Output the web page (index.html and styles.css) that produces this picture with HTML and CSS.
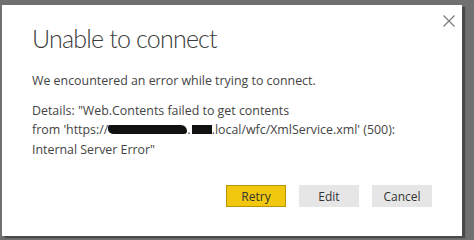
FILE: index.html
```html
<!DOCTYPE html>
<html lang="en">
<head>
    <meta charset="UTF-8">
    <title>Unable to connect</title>
    <link rel="stylesheet" href="styles.css">
</head>
<body>

    <div class="dialog">
        <button class="close" aria-label="Close">
            <svg width="12" height="12" viewBox="0 0 12 12">
                <path d="M0.5 0.5 L11.5 11.5 M11.5 0.5 L0.5 11.5" stroke="#7a7a7a" stroke-width="1.2" fill="none"/>
            </svg>
        </button>

        <h1>Unable to connect</h1>

        <p class="message">We encountered an error while trying to connect.</p>

        <p class="details">Details: "Web.Contents failed to get contents<br>from 'https://<span class="redact long"></span>.<span class="redact short"></span>.local/wfc/XmlService.xml' (500):<br>Internal Server Error"</p>

        <div class="actions">
            <button class="btn primary">Retry</button>
            <button class="btn">Edit</button>
            <button class="btn">Cancel</button>
        </div>
    </div>

</body>
</html>
```

FILE: styles.css
```css
body {
    margin: 0;
    padding: 5px 0 0 2px;
    background-color: #707070;
    font-family: "Open Sans", Arial, sans-serif;
    height: 240px;
    box-sizing: border-box;
    overflow: hidden;
}
.dialog {
    position: relative;
    width: 460px;
    height: 231px;
    box-sizing: border-box;
    background-color: #fff;
    padding: 16px 30px 0 30px;
    box-shadow: 3px 2px 1px #4a4a4a;
}
.close {
    position: absolute;
    top: 9px;
    right: 6px;
    width: 14px;
    height: 14px;
    padding: 1px;
    border: none;
    background: none;
}
h1 {
    margin: 0;
    font-family: Lato, "Open Sans", sans-serif;
    font-weight: 300;
    font-size: 25px;
    letter-spacing: -0.8px;
    line-height: 34px;
    color: #3a3a3a;
}
.message {
    margin: 15.5px 0 0;
    font-size: 12.4px;
    line-height: 20px;
    color: #444;
}
.details {
    margin: 10px 0 0;
    font-size: 12.4px;
    line-height: 19.5px;
    color: #444;
}
.redact {
    display: inline-block;
    height: 9px;
    background-color: #111;
    vertical-align: 0;
}
.redact.long {
    width: 79px;
    border-radius: 2px 6px 3px 5px;
}
.redact.short {
    width: 20px;
    margin-left: 1px;
}
.actions {
    display: flex;
    justify-content: flex-end;
    gap: 13px;
    margin-top: 26px;
}
.btn {
    width: 60px;
    height: 22px;
    padding: 0;
    border: 1px solid #e6e6e6;
    background-color: #e6e6e6;
    font-family: "Open Sans", Arial, sans-serif;
    font-size: 12px;
    color: #333;
}
.btn.primary {
    background-color: #f2c80f;
    border-color: #b8960a;
}
```
